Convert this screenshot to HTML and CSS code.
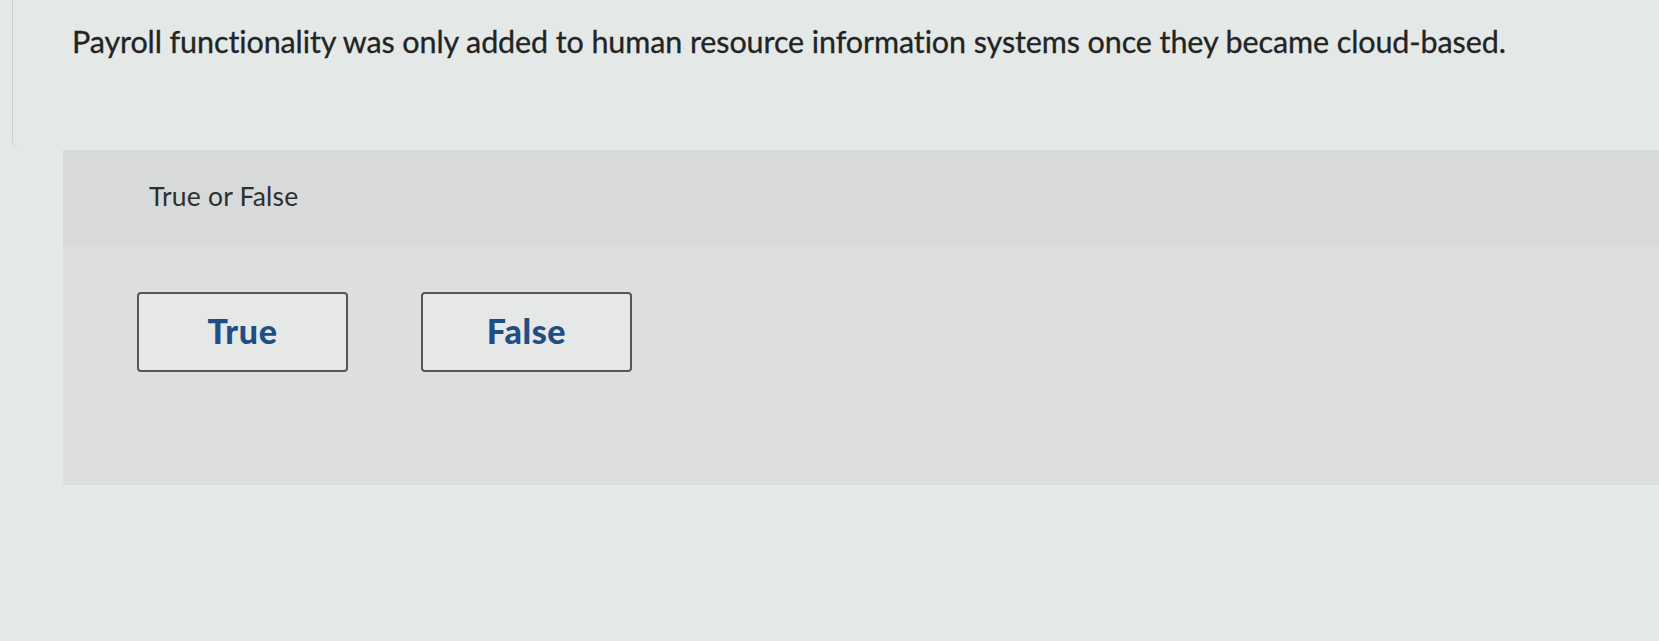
FILE: index.html
```html
<!DOCTYPE html>
<html lang="en">
<head>
<meta charset="utf-8">
<title>True or False</title>
<link rel="stylesheet" href="styles.css">
</head>
<body>
  <div class="page">
    <div class="question">
      <p class="prompt">Payroll functionality was only added to human resource information systems once they became cloud-based.</p>
    </div>
    <div class="panel">
      <div class="panel-head">
        <span class="label">True or False</span>
      </div>
      <div class="panel-body">
        <button class="choice">True</button>
        <button class="choice">False</button>
      </div>
    </div>
  </div>
</body>
</html>
```
FILE: styles.css
```css
html, body {
  margin: 0;
  padding: 0;
}
body {
  background: #e4e8e7;
  font-family: Lato, "Open Sans", Arial, sans-serif;
  width: 1659px;
  height: 641px;
  overflow: hidden;
}
.page {
  display: flex;
  flex-direction: column;
}
.question {
  height: 148px;
  margin-left: 12px;
  border-left: 1px solid #cdd0cf;
  border-bottom-left-radius: 8px;
  box-sizing: border-box;
  padding-left: 59px;
  padding-top: 21px;
}
.prompt {
  margin: 0;
  font-size: 30.5px;
  line-height: 40px;
  color: #222424;
  letter-spacing: -0.1px;
  -webkit-text-stroke: 0.3px #222424;
}
.panel {
  margin-left: 63px;
  margin-top: 2px;
  display: flex;
  flex-direction: column;
  background: #dcdfde;
}
.panel-head {
  height: 95px;
  background: #d7dad9;
  box-sizing: border-box;
  padding-left: 86px;
  padding-top: 30px;
}
.label {
  font-size: 26.5px;
  color: #2e3030;
  letter-spacing: 0.2px;
}
.panel-body {
  height: 240px;
  box-sizing: border-box;
  padding-left: 74px;
  padding-top: 47px;
  display: flex;
  gap: 73px;
  align-items: flex-start;
}
.choice {
  width: 211px;
  height: 80px;
  background: #e5e8e7;
  border: 2px solid #555757;
  border-radius: 4px;
  font-family: Lato, "Open Sans", Arial, sans-serif;
  font-weight: 900;
  font-size: 34px;
  letter-spacing: 0.6px;
  color: #1f4e86;
  padding: 0;
  padding-bottom: 4px;
}
```
